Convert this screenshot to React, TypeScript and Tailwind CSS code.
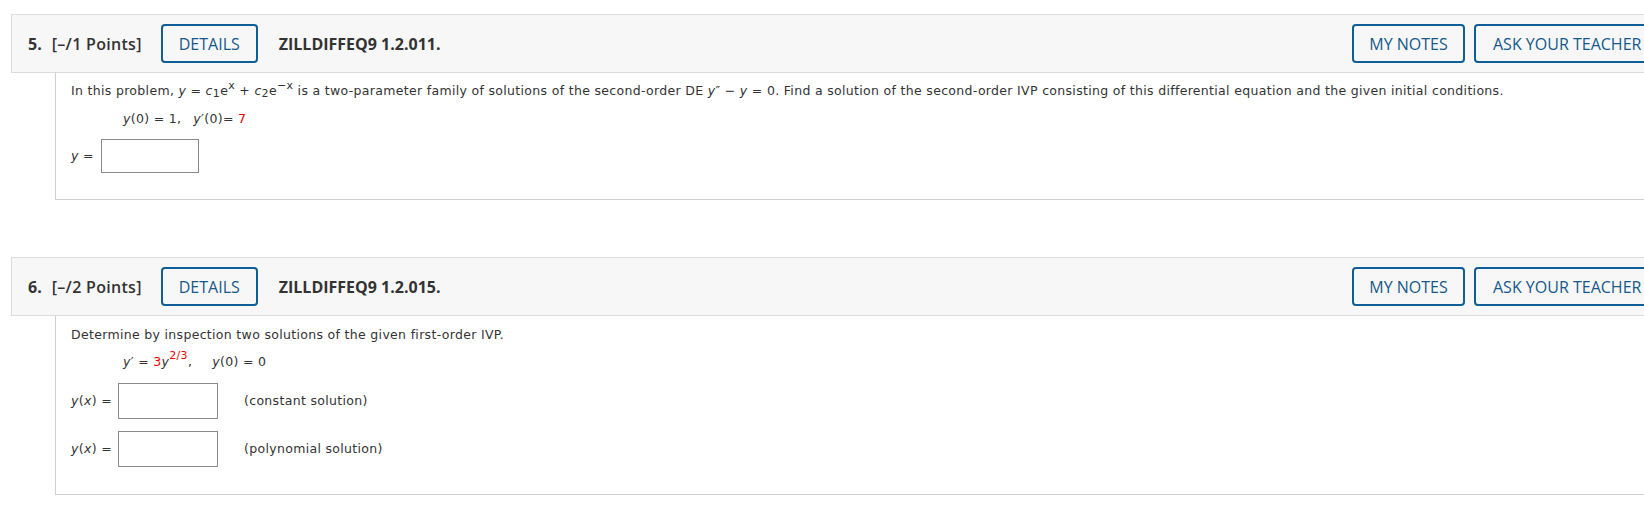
import React, { ReactElement } from "react";

const btn =
  "h-[39px] px-[17px] border-2 border-[#0f5f96] rounded-[4px] text-[#16598a] text-[16px] flex items-center bg-[#f7f7f7] whitespace-nowrap";

const Header = ({ num, pts, code }: { num: string; pts: string; code: string }): ReactElement => (
  <div className="h-[59px] border border-[#dcdcdc] bg-[#f7f7f7] flex items-center pl-[16px] text-[#333] font-['Open_Sans',sans-serif]">
    <span className="text-[16px] font-bold">{num}</span>
    <span className="text-[16px] font-semibold ml-[10px] tracking-[0.3px]">{pts}</span>
    <button className={`${btn} ml-[19px] w-[97px] justify-center`}>DETAILS</button>
    <span className="text-[16px] font-bold ml-[21px]">{code}</span>
    <div className="flex-1" />
    <button className={`${btn} w-[113px] justify-center`}>MY NOTES</button>
    <button className={`${btn} ml-[9px] w-[200px]`}>ASK YOUR TEACHER</button>
    <div className="w-[45px]" />
  </div>
);

const Input = ({ w, h }: { w: string; h: string }): ReactElement => (
  <div className={`${w} ${h} border border-[#8a8a8a] bg-white`} />
);

const body =
  "border-l border-b border-[#cfcfcf] pl-[15px] text-[#333] font-['DejaVu_Sans',sans-serif] text-[12.5px] tracking-[0.32px]";

const App = (): ReactElement => {
  return (
    <div className="w-[1644px] h-[522px] overflow-hidden bg-white">
      <div className="w-[1720px] pt-[14px] pl-[11px]">
        <Header num="5." pts="[–/1 Points]" code="ZILLDIFFEQ9 1.2.011." />
        <div className={`${body} ml-[44px] h-[127px] pt-[9px]`}>
          <div className="h-[18px] flex items-center whitespace-nowrap">
            In this problem,&nbsp;<i>y</i>&nbsp;=&nbsp;<i>c</i>
            <sub className="text-[11px]">1</sub>e<sup className="text-[11px]">x</sup>&nbsp;+&nbsp;<i>c</i>
            <sub className="text-[11px]">2</sub>e<sup className="text-[11px]">−x</sup>&nbsp;is a two-parameter family of
            solutions of the second-order DE&nbsp;
            <i>y</i>″ −&nbsp;<i>y</i>&nbsp;= 0. Find a solution of the second-order IVP consisting of this differential
            equation and the given initial conditions.
          </div>
          <div className="h-[18px] mt-[10px] ml-[52px] flex items-center whitespace-nowrap">
            <i>y</i>(0) = 1,<span className="w-[12px]" />
            <i>y</i>′(0)=&nbsp;<span className="text-[#e00]">7</span>
          </div>
          <div className="flex items-center mt-[11px]">
            <span className="w-[30px]">
              <i>y</i> =
            </span>
            <Input w="w-[98px]" h="h-[34px]" />
          </div>
        </div>

        <div className="h-[57px]" />

        <Header num="6." pts="[–/2 Points]" code="ZILLDIFFEQ9 1.2.015." />
        <div className={`${body} ml-[44px] h-[179px] pt-[10px]`}>
          <div className="h-[18px] flex items-center whitespace-nowrap">
            Determine by inspection two solutions of the given first-order IVP.
          </div>
          <div className="h-[18px] mt-[9px] ml-[52px] flex items-center whitespace-nowrap">
            <i>y</i>′ =&nbsp;<span className="text-[#e00]">3</span>
            <i>y</i>
            <sup className="text-[#e00] text-[11px] -mt-[2px]">2/3</sup>,<span className="w-[20px]" />
            <i>y</i>(0) = 0
          </div>
          <div className="flex items-center mt-[12px]">
            <span className="w-[47px]">
              <i>y</i>(<i>x</i>) =
            </span>
            <Input w="w-[100px]" h="h-[36px]" />
            <span className="ml-[26px]">(constant solution)</span>
          </div>
          <div className="flex items-center mt-[12px]">
            <span className="w-[47px]">
              <i>y</i>(<i>x</i>) =
            </span>
            <Input w="w-[100px]" h="h-[36px]" />
            <span className="ml-[26px]">(polynomial solution)</span>
          </div>
        </div>
      </div>
    </div>
  );
};

export default App;
